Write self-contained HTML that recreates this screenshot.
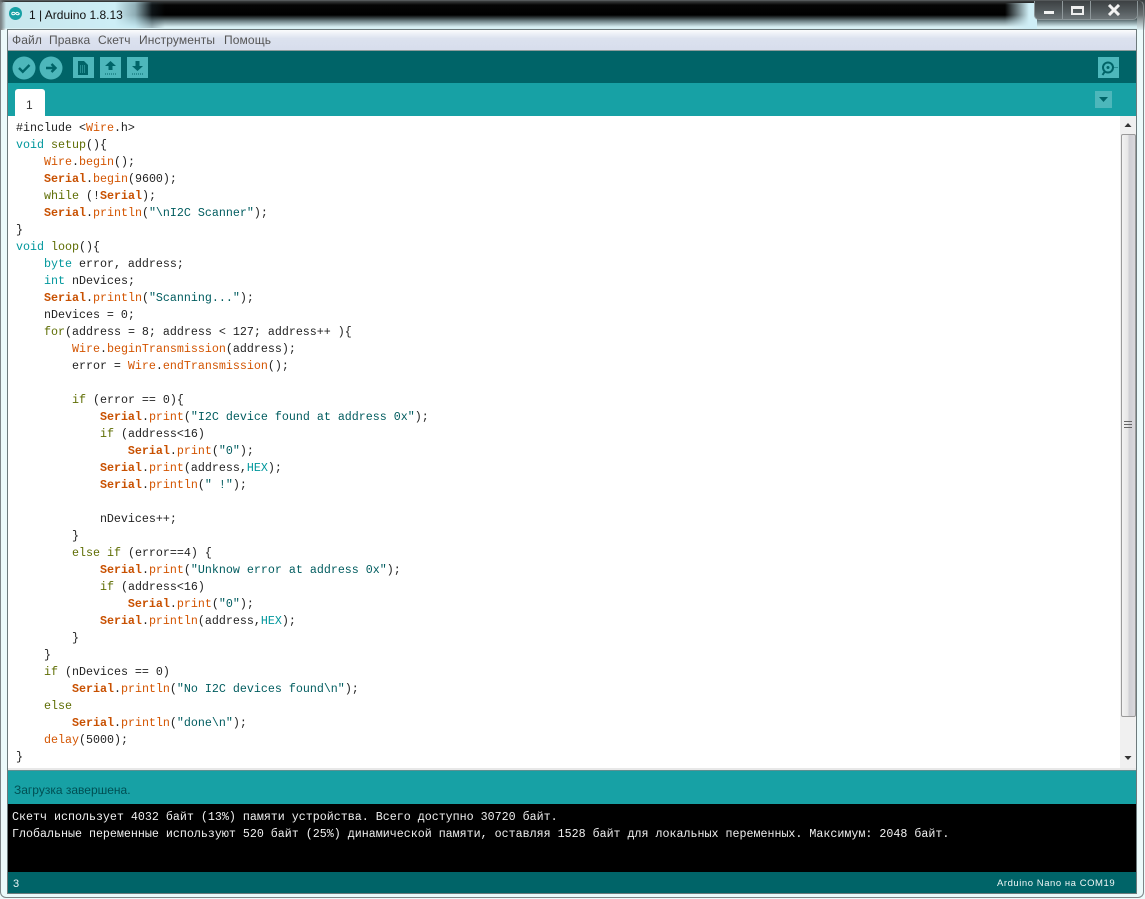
<!DOCTYPE html>
<html><head><meta charset="utf-8">
<style>
html,body{margin:0;padding:0;width:1145px;height:899px;overflow:hidden;background:#ecfafb;}
.a{position:absolute;}
#code{position:absolute;left:16px;top:120px;margin:0;font:11.67px/17px "Liberation Mono","DejaVu Sans Mono",monospace;color:#222;white-space:pre;}
.k{color:#00979C}.c{color:#5E6D03}.f{color:#D35400}.s{color:#005C5F}.b{color:#C85000;font-weight:bold}.h{color:#5E6D03}
.m{position:absolute;top:33px;font:12px/14px "Liberation Sans","DejaVu Sans",sans-serif;letter-spacing:.12px;color:#555;}
#con{position:absolute;left:12px;top:809px;margin:0;font:11.67px/17px "Liberation Mono",monospace;color:#f0f0f0;white-space:pre;}
</style></head><body>
<!-- frame & title -->
<div class="a" style="left:0;top:0;width:1145px;height:29px;background:linear-gradient(180deg,#4a4d4e 0,#050505 5px,#000 15px,#6f8387 21px,#d8f0f4 27px)"></div>
<div class="a" style="left:0;top:2px;width:165px;height:26px;background:linear-gradient(90deg,#c8e6ec 0,#cdeef6 115px,rgba(190,230,240,.75) 135px,rgba(40,60,70,.3) 152px,rgba(0,0,0,0) 165px);"></div>
<div class="a" style="left:0;top:0;width:6px;height:30px;background:linear-gradient(90deg,#6d7274,rgba(200,230,236,0))"></div>
<div class="a" style="left:1005px;top:3px;width:32px;height:26px;background:linear-gradient(90deg,rgba(190,230,240,0),#cfeef6 75%);"></div>
<div class="a" style="left:1137px;top:0;width:8px;height:30px;background:linear-gradient(180deg,#3a3f41,#6b7274 50%,#dff2f5)"></div>
<div class="a" style="left:1034px;top:0;width:102px;height:19px;border:1px solid #8a9497;border-top:0;border-radius:0 0 5px 5px;background:linear-gradient(180deg,#3a3e40,#555c5f 60%,#6d7578)"></div>
<div class="a" style="left:1062px;top:0;width:1px;height:19px;background:#8f989b"></div>
<div class="a" style="left:1090px;top:0;width:1px;height:19px;background:#8f989b"></div>
<div class="a" style="left:1044px;top:11px;width:10px;height:3px;background:#f2f2f2"></div>
<div class="a" style="left:1071px;top:6px;width:9px;height:4px;border:2px solid #eee;border-top-width:3px"></div>
<svg class="a" style="left:1107px;top:4px" width="14" height="12"><path d="M2 1L12 11M12 1L2 11" stroke="#f2f2f2" stroke-width="3"/></svg>
<div class="a" style="left:0;top:0;width:1142px;height:896px;border:1px solid #7d8588;border-radius:6px;border-top-color:#55595b;background:transparent"></div>
<!-- title icon -->
<div class="a" style="left:9px;top:7px;width:13px;height:13px;border-radius:50%;background:#17a1a5"></div>
<svg class="a" style="left:9px;top:7px" width="13" height="13"><path d="M6.500 6.500C5.200 4.800 2.800 4.800 2.800 6.500S5.200 8.200 6.500 6.500S8 4.800 10.200 6.500C10.200 8.200 7.800 8.200 6.500 6.500" fill="none" stroke="#fff" stroke-width="1"/></svg>
<div class="a" style="left:29px;top:8px;font:12px/14px 'Liberation Sans',sans-serif;color:#111;white-space:pre">1 | Arduino 1.8.13</div>
<!-- client -->
<div class="a" style="left:7px;top:29px;width:1130px;height:865px;background:#6d7a7c"></div>
<div class="a" style="left:8px;top:30px;width:1128px;height:21px;background:linear-gradient(180deg,#fbfcfd,#dce2ef 40%,#d7ddec);"></div>
<div class="a" style="left:8px;top:50px;width:1128px;height:1px;background:#8c9c9c"></div>
<span class="m" style="left:12px">Файл</span><span class="m" style="left:49px">Правка</span><span class="m" style="left:98px">Скетч</span><span class="m" style="left:139px">Инструменты</span><span class="m" style="left:224px">Помощь</span>
<div class="a" style="left:8px;top:51px;width:1128px;height:32px;background:#006468"></div>
<div class="a" style="left:8px;top:83px;width:1128px;height:33px;background:#17A1A5"></div>
<!-- toolbar -->
<svg class="a" style="left:8px;top:51px" width="150" height="32">
<circle cx="16" cy="17" r="11.500" fill="#4db7bb"/><path d="M11 17l3.800 3.800L21.500 14" fill="none" stroke="#006468" stroke-width="2.400"/>
<circle cx="43" cy="17" r="11.500" fill="#4db7bb"/><path d="M38 17h9M43.500 13l4 4l-4 4" fill="none" stroke="#006468" stroke-width="2.400"/>
<rect x="65" y="6" width="21" height="21" fill="#4db7bb"/><path d="M70 10h6l4 4v10H70z" fill="#006468"/><path d="M72 15h6M72 17h6M72 19h6M72 21h6" stroke="#4db7bb" stroke-width="1" stroke-dasharray="1 1"/>
<rect x="92" y="6" width="21" height="21" fill="#4db7bb"/><path d="M102.500 10l5.500 5h-3.500v4h-4v-4H97z" fill="#006468"/><path d="M97 23h11" stroke="#006468" stroke-dasharray="1 1"/>
<rect x="119" y="6" width="21" height="21" fill="#4db7bb"/><path d="M129.500 20l5.500-5h-3.500v-5h-4v5H124z" fill="#006468"/><path d="M124 23h11" stroke="#006468" stroke-dasharray="1 1"/>
</svg>
<svg class="a" style="left:1098px;top:57px" width="21" height="21"><rect width="21" height="21" fill="#4db7bb"/><circle cx="10" cy="10.500" r="5" fill="none" stroke="#006468" stroke-width="2"/><circle cx="10" cy="10.500" r="1.500" fill="#006468"/><path d="M6.500 15l-2 3" stroke="#006468" stroke-width="2"/><path d="M16.500 10.500h3" stroke="#006468" stroke-dasharray="1 1"/></svg>
<!-- tab -->
<div class="a" style="left:15px;top:89px;width:30px;height:27px;background:#fff;border-radius:3px 3px 0 0"></div>
<div class="a" style="left:26px;top:98px;font:12px/14px 'Liberation Sans',sans-serif;color:#333">1</div>
<svg class="a" style="left:1095px;top:91px" width="17" height="17"><rect width="17" height="17" fill="#4db7bb"/><path d="M4 6h9l-4.500 5z" fill="#006468"/></svg>
<!-- editor -->
<div class="a" style="left:8px;top:116px;width:1128px;height:652px;background:#fff"></div>
<pre id="code">#include &lt;<span class="f">Wire</span>.h&gt;
<span class="k">void</span> <span class="h">setup</span>(){
    <span class="f">Wire</span>.<span class="f">begin</span>();
    <span class="b">Serial</span>.<span class="f">begin</span>(9600);
    <span class="c">while</span> (!<span class="b">Serial</span>);
    <span class="b">Serial</span>.<span class="f">println</span>(<span class="s">"\nI2C Scanner"</span>);
}
<span class="k">void</span> <span class="h">loop</span>(){
    <span class="k">byte</span> error, address;
    <span class="k">int</span> nDevices;
    <span class="b">Serial</span>.<span class="f">println</span>(<span class="s">"Scanning..."</span>);
    nDevices = 0;
    <span class="c">for</span>(address = 8; address &lt; 127; address++ ){
        <span class="f">Wire</span>.<span class="f">beginTransmission</span>(address);
        error = <span class="f">Wire</span>.<span class="f">endTransmission</span>();

        <span class="c">if</span> (error == 0){
            <span class="b">Serial</span>.<span class="f">print</span>(<span class="s">"I2C device found at address 0x"</span>);
            <span class="c">if</span> (address&lt;16)
                <span class="b">Serial</span>.<span class="f">print</span>(<span class="s">"0"</span>);
            <span class="b">Serial</span>.<span class="f">print</span>(address,<span class="k">HEX</span>);
            <span class="b">Serial</span>.<span class="f">println</span>(<span class="s">" !"</span>);

            nDevices++;
        }
        <span class="c">else</span> <span class="c">if</span> (error==4) {
            <span class="b">Serial</span>.<span class="f">print</span>(<span class="s">"Unknow error at address 0x"</span>);
            <span class="c">if</span> (address&lt;16)
                <span class="b">Serial</span>.<span class="f">print</span>(<span class="s">"0"</span>);
            <span class="b">Serial</span>.<span class="f">println</span>(address,<span class="k">HEX</span>);
        }
    }
    <span class="c">if</span> (nDevices == 0)
        <span class="b">Serial</span>.<span class="f">println</span>(<span class="s">"No I2C devices found\n"</span>);
    <span class="c">else</span>
        <span class="b">Serial</span>.<span class="f">println</span>(<span class="s">"done\n"</span>);
    <span class="f">delay</span>(5000);
}</pre>
<!-- scrollbar -->
<div class="a" style="left:1120px;top:116px;width:16px;height:652px;background:#f0f0f0"></div>
<svg class="a" style="left:1120px;top:116px" width="16" height="17"><path d="M4.500 11h7L8 7z" fill="#333"/></svg>
<svg class="a" style="left:1120px;top:749px" width="16" height="17"><path d="M4.500 7h7L8 11z" fill="#333"/></svg>
<div class="a" style="left:1121px;top:134px;width:13px;height:581px;border:1px solid #9a9a9a;border-radius:2px;background:linear-gradient(90deg,#f2f2f2,#e6e6e6 45%,#cfcfd4 55%,#d8d8dc)"></div>
<div class="a" style="left:1124px;top:421px;width:8px;height:1px;background:#666;box-shadow:0 3px 0 #666,0 6px 0 #666"></div>
<!-- status -->
<div class="a" style="left:8px;top:768px;width:1128px;height:3px;background:#e8e8e8"></div>
<div class="a" style="left:8px;top:770px;width:1128px;height:1px;background:#5e8f91"></div>
<div class="a" style="left:8px;top:771px;width:1128px;height:33px;background:#17A1A5"></div>
<div class="a" style="left:14px;top:783px;font:12px/14px 'Liberation Sans',sans-serif;color:#004f53">Загрузка завершена.</div>
<!-- console -->
<div class="a" style="left:8px;top:804px;width:1128px;height:68px;background:#000"></div>
<pre id="con">Скетч использует 4032 байт (13%) памяти устройства. Всего доступно 30720 байт.
Глобальные переменные используют 520 байт (25%) динамической памяти, оставляя 1528 байт для локальных переменных. Максимум: 2048 байт.</pre>
<!-- footer -->
<div class="a" style="left:8px;top:872px;width:1128px;height:21px;background:#006468"></div>
<div class="a" style="left:13px;top:878px;font:11px/12px 'Liberation Sans',sans-serif;color:#e8f4f4">3</div>
<div class="a" style="left:997px;top:878px;font:9.5px/12px 'Liberation Sans',sans-serif;letter-spacing:.55px;color:#eef6f6;white-space:pre">Arduino Nano на COM19</div>
</body></html>
